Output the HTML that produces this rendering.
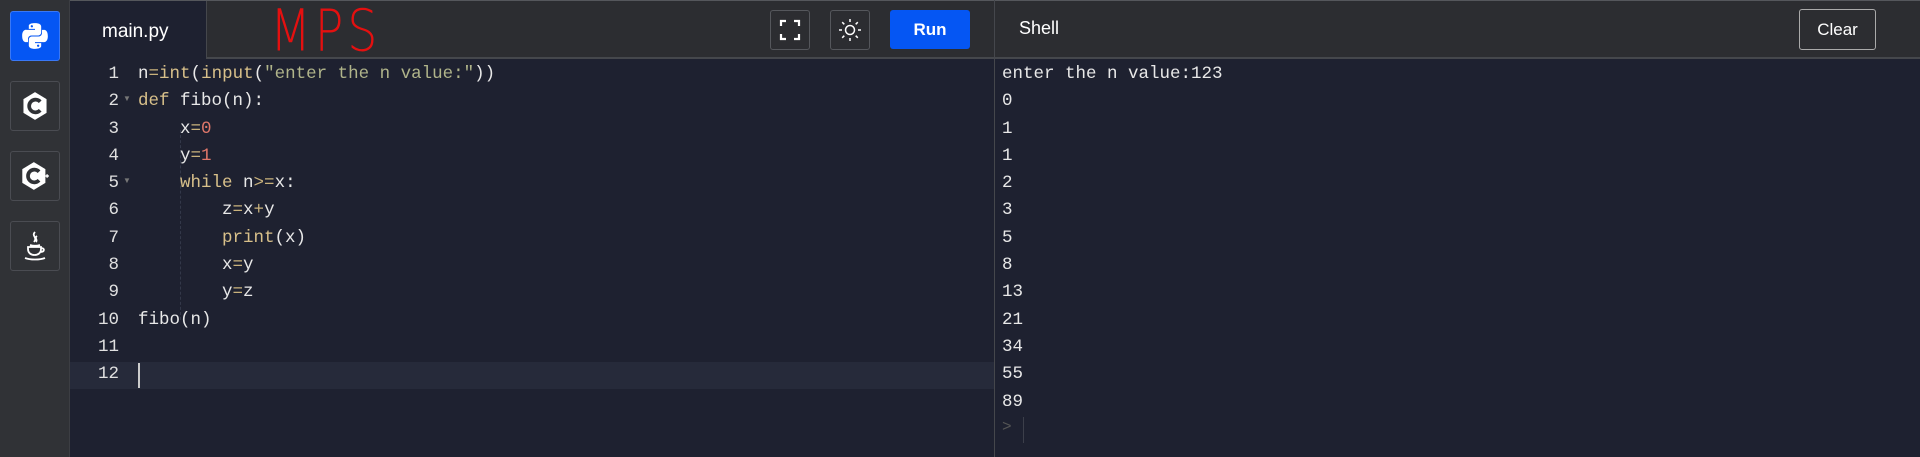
<!DOCTYPE html>
<html><head><meta charset="utf-8"><style>
*{margin:0;padding:0;box-sizing:border-box}
body{width:1920px;height:457px;background:#1e2130;overflow:hidden;position:relative;font-family:"Liberation Sans",sans-serif}
.side{position:absolute;left:0;top:0;width:70px;height:457px;background:#303236;border-right:1px solid #3c3e43}
.sb{position:absolute;left:10px;width:50px;height:50px;border:1px solid #4a4c52;border-radius:3px;display:flex;align-items:center;justify-content:center}
.hdr{position:absolute;left:70px;top:0;width:1850px;height:59px;background:#2c2d31;border-top:1px solid #55575c;border-bottom:2px solid #45474c}
.tab{position:absolute;left:70px;top:1px;width:137px;height:58px;background:#1e2130;color:#fff;font-size:19px;padding:20px 0 0 32px;border-right:1px solid #45474c}
.btn{position:absolute;top:10px;width:40px;height:40px;border:1px solid #55575c;border-radius:3px;display:flex;align-items:center;justify-content:center}
.run{position:absolute;left:890px;top:10px;width:80px;height:39px;background:#0556f3;border-radius:3px;color:#fff;font-weight:bold;font-size:17px;text-align:center;line-height:39px}
.div{position:absolute;left:994px;top:0;width:1px;height:457px;background:#45474c}
.shell{position:absolute;left:1019px;top:18px;color:#fff;font-size:18px}
.clear{position:absolute;left:1799px;top:9px;width:77px;height:41px;border:1px solid #aaa;border-radius:3px;color:#fff;font-size:17px;text-align:center;line-height:39px}
.code{position:absolute;top:61px;font-family:"Liberation Mono",monospace;font-size:17.5px;line-height:27.3px;color:#e8e8e8;white-space:pre}
.ln{left:70px;width:49px;text-align:right;color:#e0e0e0}
.k{color:#d8c08a}.s{color:#b0b48a}.n{color:#e0776a}.o{color:#c9b27c}
.hl{position:absolute;left:70px;top:362px;width:924px;height:27px;background:#262a3a}
.cur{position:absolute;left:138px;top:363px;width:2px;height:25px;background:#ccc}
.guide{position:absolute;left:180px;top:130px;width:1px;height:190px;border-left:1px dashed #333849}
</style></head><body>
<div class="side">
 <div class="sb" style="top:11px;background:#0556f3;border-color:#3a78f5">
  <svg width="28" height="28" viewBox="0 0 24 24"><path fill="#fff" d="M11.9 1C6.4 1 6.7 3.4 6.7 3.4v2.5h5.3v.8H4.6S1 6.3 1 11.9s3.1 5.4 3.1 5.4h1.9v-2.6s-.1-3.1 3.1-3.1h5.3s2.9 0 2.9-2.8V4S17.7 1 11.9 1zM9 2.7a1 1 0 110 1.9 1 1 0 010-1.9z"/><path fill="#fff" d="M12.1 23c5.5 0 5.2-2.4 5.2-2.4v-2.5H12v-.8h7.4s3.6.4 3.6-5.2-3.1-5.4-3.1-5.4H18v2.6s.1 3.1-3.1 3.1H9.6s-2.9 0-2.9 2.8V20s-.4 3 5.4 3zm2.9-1.7a1 1 0 110-1.9 1 1 0 010 1.9z"/></svg>
 </div>
 <div class="sb" style="top:81px"><svg width="28" height="30" viewBox="0 0 24 26"><path fill="#fff" d="M12 1l10 6v12l-10 6-10-6V7z"/><path fill="none" stroke="#303236" stroke-width="3.2" d="M16.5 9.3A5.5 5.5 0 1016.5 16.7"/></svg></div>
 <div class="sb" style="top:151px"><svg width="30" height="30" viewBox="0 0 26 26"><path fill="#fff" d="M12 1l10 6v12l-10 6-10-6V7z"/><path fill="none" stroke="#303236" stroke-width="3.2" d="M16.5 9.3A5.5 5.5 0 1016.5 16.7"/><path stroke="#fff" stroke-width="1.2" d="M18 13h3M19.5 11.5v3M22 13h3M23.5 11.5v3"/></svg></div>
 <div class="sb" style="top:221px"><svg width="24" height="32" viewBox="0 0 24 32"><path fill="none" stroke="#fff" stroke-width="1.8" d="M12 2c-4 4 3 5-1 10M14 6c-3 2 1 4-1 6M5 17h13v2c0 4-3 6-6.5 6S5 23 5 19zM18 18c4 0 4 4-1 4M2 28c5 2 15 2 20 0M7 15c3 1 7 1 10 0"/></svg></div>
</div>
<div class="hdr"></div>
<div class="tab">main.py</div>
<div style="position:absolute;left:270px;top:2px;color:#e41010;font-size:50px;font-family:'DejaVu Sans',sans-serif;font-weight:200;transform:scale(0.95,1.15);transform-origin:left top;letter-spacing:4px;line-height:50px">MPS</div>
<div class="btn" style="left:770px"><svg width="22" height="22" viewBox="0 0 22 22"><path fill="none" stroke="#fff" stroke-width="2.2" d="M2 7V2h5M15 2h5v5M20 15v5h-5M7 20H2v-5"/></svg></div>
<div class="btn" style="left:830px"><svg width="24" height="24" viewBox="0 0 24 24" fill="none" stroke="#fff" stroke-width="1.5"><circle cx="12" cy="12" r="4.5"/><path d="M12 1v3M12 20v3M1 12h3M20 12h3M4.2 4.2l2.1 2.1M17.7 17.7l2.1 2.1M4.2 19.8l2.1-2.1M17.7 6.3l2.1-2.1"/></svg></div>
<div class="run">Run</div>
<div class="div"></div>
<div class="shell">Shell</div>
<div class="clear">Clear</div>
<div class="hl"></div>
<div class="guide"></div>
<div class="code ln">1
2
3
4
5
6
7
8
9
10
11
12</div>
<div style="position:absolute;left:123px;top:94px;color:#777;font-size:8px">▼</div>
<div style="position:absolute;left:123px;top:176px;color:#777;font-size:8px">▼</div>
<div class="code" style="left:138px">n<span class="o">=</span><span class="k">int</span>(<span class="k">input</span>(<span class="s">"enter the n value:"</span>))
<span class="k">def</span> fibo(n):
    x<span class="o">=</span><span class="n">0</span>
    y<span class="o">=</span><span class="n">1</span>
    <span class="k">while</span> n<span class="o">&gt;=</span>x:
        z<span class="o">=</span>x<span class="o">+</span>y
        <span class="k">print</span>(x)
        x<span class="o">=</span>y
        y<span class="o">=</span>z
fibo(n)</div>
<div class="cur"></div>
<div class="code" style="left:1002px">enter the n value:123
0
1
1
2
3
5
8
13
21
34
55
89</div>
<div style="position:absolute;left:1002px;top:418px;color:#555;font-family:'Liberation Mono',monospace;font-size:16px">&gt;</div>
<div style="position:absolute;left:1023px;top:417px;width:1px;height:26px;background:#3c3f4a"></div>
</body></html>
